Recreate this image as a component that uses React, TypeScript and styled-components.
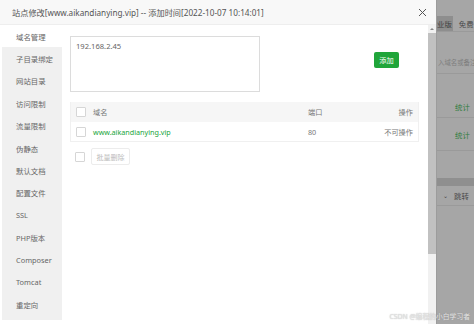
import React from "react";
import styled, { createGlobalStyle } from "styled-components";

const GlobalStyle = createGlobalStyle`
  html, body {
    margin: 0;
    padding: 0;
    background: #fff;
  }
  body {
    font-family: "Noto Sans", "Noto Sans CJK SC", sans-serif;
    overflow: hidden;
  }
  * {
    box-sizing: border-box;
  }
`;

const Page = styled.div`
  position: relative;
  width: 474px;
  height: 324px;
  display: flex;
  overflow: hidden;
`;

const Modal = styled.div`
  width: 436px;
  height: 100%;
  display: flex;
  flex-direction: column;
  background: #fff;
`;

const Header = styled.div`
  height: 25px;
  flex-shrink: 0;
  display: flex;
  align-items: center;
  justify-content: space-between;
  padding: 0 9px 0 12px;
  background: #f8f8f8;
  border-bottom: 1px solid #eee;
  font-size: 8.2px;
  color: #555;
  white-space: nowrap;
`;

const Close = styled.span`
  display: flex;
  width: 9px;
  height: 9px;
`;

const Body = styled.div`
  flex: 1;
  display: flex;
  min-height: 0;
`;

const Sidebar = styled.ul`
  list-style: none;
  margin: 0 0 0 2px;
  padding: 0;
  width: 60px;
  height: 295px;
  background: #f0f0f0;
  flex-shrink: 0;
`;

const NavItem = styled.li<{ $active?: boolean }>`
  height: 22.4px;
  display: flex;
  align-items: center;
  padding-left: 14px;
  font-size: 7.4px;
  color: #666;
  background: ${(p) => (p.$active ? "#fff" : "transparent")};
`;

const Content = styled.div`
  flex: 1;
  padding: 11px 9px 0 8px;
  display: flex;
  flex-direction: column;
`;

const AddRow = styled.div`
  display: flex;
  align-items: flex-start;
  gap: 114px;
`;

const Input = styled.div`
  width: 190px;
  height: 56px;
  border: 1px solid #dcdcdc;
  padding: 4px 5px;
  font-size: 7.6px;
  color: #666;
`;

const AddButton = styled.button`
  margin-top: 16px;
  width: 25px;
  height: 16px;
  padding: 0;
  border: none;
  border-radius: 2px;
  background: #20a53a;
  color: #fff;
  font-family: inherit;
  font-size: 7.2px;
`;

const Table = styled.div`
  margin-top: 10px;
  width: 349px;
  border: 1px solid #f0f0f0;
  border-top: none;
`;

const Row = styled.div<{ $head?: boolean }>`
  height: ${(p) => (p.$head ? "20px" : "19px")};
  display: grid;
  grid-template-columns: 22px 1fr 58px 52px;
  align-items: center;
  background: ${(p) => (p.$head ? "#f6f6f6" : "#fff")};
  font-size: 7.2px;
  color: #777;
`;

const Cell = styled.div<{ $right?: boolean; $green?: boolean }>`
  text-align: ${(p) => (p.$right ? "right" : "left")};
  padding-right: ${(p) => (p.$right ? "5px" : "0")};
  color: ${(p) => (p.$green ? "#20a53a" : "inherit")};
  white-space: nowrap;
`;

const Check = styled.span`
  display: block;
  width: 10px;
  height: 10px;
  margin-left: 5px;
  border: 1px solid #d6d6d6;
  background: #fff;
  border-radius: 1px;
`;

const BatchRow = styled.div`
  margin-top: 6px;
  display: flex;
  align-items: center;
  gap: 6px;
`;

const BatchButton = styled.button`
  width: 39px;
  height: 17px;
  padding: 0;
  border: 1px solid #ececec;
  border-radius: 2px;
  background: #fff;
  color: #bbb;
  font-family: inherit;
  font-size: 7px;
`;

const Scrollbar = styled.div`
  width: 8px;
  flex-shrink: 0;
  background: #f1f1f1;
  display: flex;
  flex-direction: column;
  align-items: center;
`;

const ArrowUp = styled.span`
  margin-top: 3px;
  width: 0;
  height: 0;
  border-left: 2px solid transparent;
  border-right: 2px solid transparent;
  border-bottom: 2px solid #888;
`;

const Thumb = styled.div`
  margin-top: 3px;
  width: 8px;
  height: 221px;
  background: #c1c1c1;
`;

const Backdrop = styled.div`
  flex: 1;
  display: flex;
  flex-direction: column;
  background: #a6a6a6;
  border-left: 1px solid #9c9c9c;
  font-size: 7.4px;
  color: #4a4a4a;
  white-space: nowrap;
  overflow: hidden;
`;

const BackRow = styled.div<{ $h: number; $bg?: string; $line?: boolean }>`
  height: ${(p) => p.$h}px;
  flex-shrink: 0;
  display: flex;
  align-items: center;
  gap: 6px;
  background: ${(p) => p.$bg || "transparent"};
  border-bottom: ${(p) => (p.$line ? "1px solid #9a9a9a" : "none")};
`;

const Chip = styled.span`
  background: #8e8e8e;
  color: #3e3e3e;
  padding: 2px 1px 2px 0;
`;

const Stat = styled.span`
  margin-left: 18px;
  color: #2f7d3c;
`;

const Placeholder = styled.span`
  color: #7d7d7d;
  margin-left: 1px;
  font-size: 6.4px;
`;

const Caret = styled.span`
  margin-left: 6px;
  font-size: 6px;
  color: #444;
`;

const Watermark = styled.div`
  position: absolute;
  right: 4px;
  bottom: 3px;
  font-size: 6.8px;
  color: #e6e6e6;
  text-shadow: 0 0 1px rgba(120, 120, 120, 0.6);
  white-space: nowrap;
`;

const navItems = [
  "域名管理",
  "子目录绑定",
  "网站目录",
  "访问限制",
  "流量限制",
  "伪静态",
  "默认文档",
  "配置文件",
  "SSL",
  "PHP版本",
  "Composer",
  "Tomcat",
  "重定向",
];

export default function App() {
  return (
    <Page>
      <GlobalStyle />
      <Modal>
        <Header>
          <span>站点修改[www.aikandianying.vip] -- 添加时间[2022-10-07 10:14:01]</span>
          <Close>
            <svg width="9" height="9" viewBox="0 0 9 9">
              <path d="M1 1L8 8M8 1L1 8" stroke="#555" strokeWidth="1" />
            </svg>
          </Close>
        </Header>
        <Body>
          <Sidebar>
            {navItems.map((item, i) => (
              <NavItem key={item} $active={i === 0}>
                {item}
              </NavItem>
            ))}
          </Sidebar>
          <Content>
            <AddRow>
              <Input>192.168.2.45</Input>
              <AddButton>添加</AddButton>
            </AddRow>
            <Table>
              <Row $head>
                <Check />
                <Cell>域名</Cell>
                <Cell>端口</Cell>
                <Cell $right>操作</Cell>
              </Row>
              <Row>
                <Check />
                <Cell $green>www.aikandianying.vip</Cell>
                <Cell>80</Cell>
                <Cell $right>不可操作</Cell>
              </Row>
            </Table>
            <BatchRow>
              <Check />
              <BatchButton>批量删除</BatchButton>
            </BatchRow>
          </Content>
          <Scrollbar>
            <ArrowUp />
            <Thumb />
          </Scrollbar>
        </Body>
      </Modal>
      <Backdrop>
        <BackRow $h={15} />
        <BackRow $h={17} $line>
          <Chip>业版</Chip>
          <span>免费</span>
        </BackRow>
        <BackRow $h={20} />
        <BackRow $h={22} $line>
          <Placeholder>入域名或备注</Placeholder>
        </BackRow>
        <BackRow $h={22} />
        <BackRow $h={22} $line>
          <Stat>统计</Stat>
        </BackRow>
        <BackRow $h={33} $line>
          <Stat>统计</Stat>
        </BackRow>
        <BackRow $h={27} />
        <BackRow $h={8} $bg="#8f8f8f" />
        <BackRow $h={20} $line>
          <Caret>⌄</Caret>
          <span>跳转</span>
        </BackRow>
      </Backdrop>
      <Watermark>CSDN @编程的小白学习者</Watermark>
    </Page>
  );
}
